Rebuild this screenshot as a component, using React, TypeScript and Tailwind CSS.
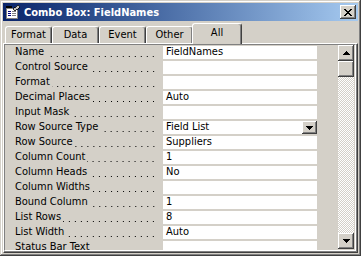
const font = "font-['Tahoma','DejaVu_Sans_Condensed','Liberation_Sans',sans-serif]";

const raised =
  'shadow-[inset_-1px_-1px_#404040,inset_1px_1px_#fff,inset_-2px_-2px_#808080,inset_2px_2px_#d4d0c8]';

const rows: Array<{ label: string; value: string; combo?: boolean }> = [
  { label: 'Name', value: 'FieldNames' },
  { label: 'Control Source', value: '' },
  { label: 'Format', value: '' },
  { label: 'Decimal Places', value: 'Auto' },
  { label: 'Input Mask', value: '' },
  { label: 'Row Source Type', value: 'Field List', combo: true },
  { label: 'Row Source', value: 'Suppliers' },
  { label: 'Column Count', value: '1' },
  { label: 'Column Heads', value: 'No' },
  { label: 'Column Widths', value: '' },
  { label: 'Bound Column', value: '1' },
  { label: 'List Rows', value: '8' },
  { label: 'List Width', value: 'Auto' },
  { label: 'Status Bar Text', value: '' },
];

const tabs = ['Format', 'Data', 'Event', 'Other'];

function SheetIcon() {
  return (
    <svg width="16" height="16" viewBox="0 0 16 16" shapeRendering="crispEdges">
      <rect x="1.5" y="4.5" width="11" height="10" fill="#fff" stroke="#808080" />
      <rect x="3" y="7" width="3" height="1" fill="#000080" />
      <rect x="7" y="7" width="4" height="1" fill="#808080" />
      <rect x="3" y="9" width="3" height="1" fill="#000080" />
      <rect x="7" y="9" width="4" height="1" fill="#808080" />
      <rect x="3" y="11" width="3" height="1" fill="#000080" />
      <rect x="7" y="11" width="4" height="1" fill="#808080" />
      <path d="M8 5 L13 1 L15 3 L10 7 Z" fill="#c0c0c0" stroke="#000" strokeWidth="0.8" />
      <rect x="1" y="2" width="6" height="2" fill="#000" />
    </svg>
  );
}

function CloseGlyph() {
  return (
    <svg width="8" height="7" viewBox="0 0 8 7" shapeRendering="crispEdges">
      <path d="M0 0h2v1h1v1h2V1h1V0h2v1H7v1H6v1H5v1h1v1h1v1h1v1H6V6H5V5H3v1H2v1H0V6h1V5h1V4h1V3H2V2H1V1H0z" fill="#000" />
    </svg>
  );
}

function Arrow({ down }: { down?: boolean }) {
  return (
    <svg width="7" height="4" viewBox="0 0 7 4" shapeRendering="crispEdges">
      {down ? (
        <path d="M0 0h7v1H6v1H5v1H4v1H3V3H2V2H1V1H0z" fill="#000" />
      ) : (
        <path d="M3 0h1v1h1v1h1v1h1v1H0V3h1V2h1V1h1z" fill="#000" />
      )}
    </svg>
  );
}

export default function App() {
  return (
    <div
      className={`w-[361px] h-[256px] p-[3px] flex flex-col bg-[#d4d0c8] text-[11px] text-black overflow-hidden shadow-[inset_-1px_-1px_#404040,inset_1px_1px_#d4d0c8,inset_-2px_-2px_#808080,inset_2px_2px_#fff] ${font}`}
    >
      {/* Title bar */}
      <div className="h-[18px] flex items-center pl-[2px] pr-[2px] bg-gradient-to-r from-[#0a246a] to-[#a6caf0]">
        <SheetIcon />
        <span className="ml-[3px] font-bold text-white leading-none">Combo Box: FieldNames</span>
        <div className={`ml-auto w-[16px] h-[14px] flex items-center justify-center bg-[#d4d0c8] ${raised}`}>
          <CloseGlyph />
        </div>
      </div>

      {/* Tabs */}
      <div className="mt-[2px] h-[20px] flex items-end pl-[2px]">
        {tabs.map((t) => (
          <div
            key={t}
            className="w-[47px] h-[17px] flex items-center justify-center border-l border-t border-white border-r border-r-[#404040] rounded-t-[3px] shadow-[inset_-1px_0_#808080]"
          >
            {t}
          </div>
        ))}
        <div className="relative z-10 -ml-[1px] -mb-[1px] w-[50px] h-[21px] pb-[2px] flex items-center justify-center bg-[#d4d0c8] border-l border-t border-white border-r border-r-[#404040] rounded-t-[3px] shadow-[inset_-1px_0_#808080]">
          All
        </div>
      </div>

      {/* Tab page */}
      <div className="flex-1 min-h-0 flex border border-[#404040] border-l-white border-t-white shadow-[inset_-1px_-1px_#808080]">
        <div className="flex-1 min-h-0 flex border border-white border-l-[#808080] border-t-[#808080] mb-[1px] mr-[1px] overflow-hidden">
          <div className="w-[312px] pt-[1px] flex flex-col overflow-hidden">
            {rows.map((r) => (
              <div key={r.label} className="h-[15px] shrink-0 flex items-start">
                <div className="w-[158px] h-[13px] pl-[10px] pr-[8px] flex items-center whitespace-nowrap">
                  <span>{r.label}</span>
                  <div className="flex-1 ml-[2px] h-[1px] self-end mb-[2px] bg-[image:linear-gradient(90deg,transparent_4px,#000_4px,#000_5px,transparent_5px)] bg-[length:6px_1px] bg-right" />
                </div>
                <div className="w-[154px] h-[13px] bg-white pl-[3px] flex items-center whitespace-nowrap">
                  <span className="flex-1">{r.value}</span>
                  {r.combo && (
                    <div className={`w-[15px] h-[13px] flex items-center justify-center bg-[#d4d0c8] ${raised}`}>
                      <Arrow down />
                    </div>
                  )}
                </div>
              </div>
            ))}
          </div>

          {/* Scrollbar */}
          <div className="ml-auto mr-[1px] mb-[1px] w-[16px] flex flex-col bg-[image:repeating-conic-gradient(#fff_0_25%,#d4d0c8_0_50%)] bg-[length:2px_2px]">
            <div className={`h-[16px] shrink-0 flex items-center justify-center bg-[#d4d0c8] ${raised}`}>
              <Arrow />
            </div>
            <div className={`h-[16px] shrink-0 bg-[#d4d0c8] ${raised}`} />
            <div className="flex-1" />
            <div className={`h-[16px] shrink-0 flex items-center justify-center bg-[#d4d0c8] ${raised}`}>
              <Arrow down />
            </div>
          </div>
        </div>
      </div>
    </div>
  );
}
